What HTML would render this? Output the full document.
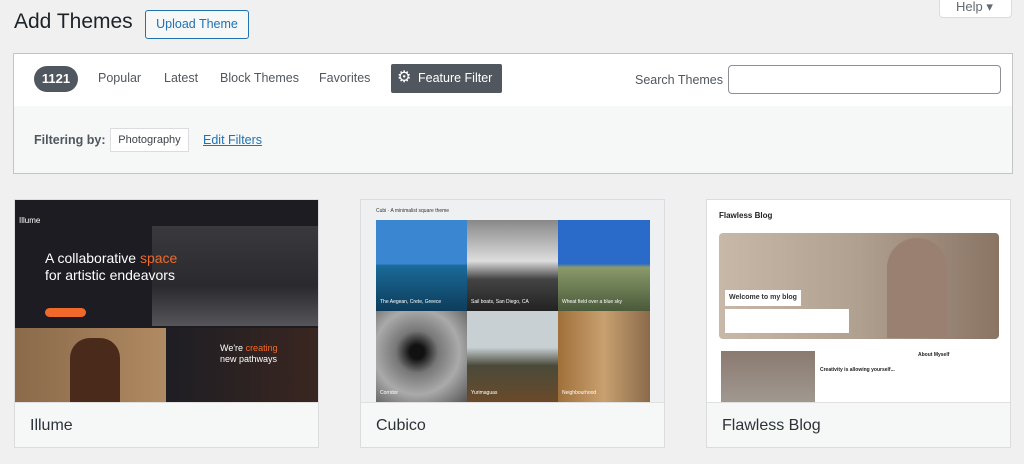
<!DOCTYPE html>
<html><head><style>
*{box-sizing:border-box;margin:0;padding:0}
body{width:1024px;height:464px;overflow:hidden;background:#f0f0f1;font-family:"Liberation Sans",sans-serif;color:#1d2327;position:relative}
.a{position:absolute}
.card{position:absolute;top:199px;width:305px;height:249px;border:1px solid #dcdcde;background:#fff;overflow:hidden}
.name{position:absolute;left:0;right:0;top:202px;height:47px;background:#f6f7f7;border-top:1px solid #e0e0e0;font-size:16px;font-weight:normal;padding:14px 0 0 15px;color:#2c3338}
.cell{position:absolute;width:91px;height:91px;color:#fff;font-size:5px}
.cell span{position:absolute;left:4px;bottom:6px}
.nav{position:absolute;top:17px;font-size:12.5px;color:#50575e}
</style></head><body>
<div class="a" style="left:14px;top:10px;font-size:21px;color:#1d2327">Add Themes</div>
<div class="a" style="left:145px;top:10px;width:104px;height:29px;border:1px solid #2271b1;border-radius:3px;background:#f6f7f7;color:#2271b1;font-size:12.5px;text-align:center;line-height:27px">Upload Theme</div>
<div class="a" style="left:939px;top:-10px;width:73px;height:28px;border:1px solid #dcdcde;border-radius:0 0 4px 4px;background:#fff;color:#646970;font-size:13px;padding:8px 0 0 16px">Help ▾</div>

<div class="a" style="left:13px;top:53px;width:1000px;height:121px;border:1px solid #c3c4c7;background:#f6f7f7">
 <div class="a" style="left:0;top:0;right:0;height:52px;background:#fff"></div>
 <div class="a" style="left:20px;top:12px;width:44px;height:26px;border-radius:13px;background:#50575e;color:#fff;font-size:13px;font-weight:bold;text-align:center;line-height:26px">1121</div>
 <div class="nav" style="left:84px">Popular</div>
 <div class="nav" style="left:150px">Latest</div>
 <div class="nav" style="left:206px">Block Themes</div>
 <div class="nav" style="left:305px">Favorites</div>
 <div class="a" style="left:377px;top:10px;width:111px;height:29px;background:#50575e;border-radius:2px;color:#fff;font-size:12.5px;line-height:29px;padding-left:27px">Feature Filter</div>
 <div class="a" style="left:383px;top:14px;color:#fff;font-size:16px;line-height:20px">⚙</div>
 <div class="nav" style="left:621px;top:19px">Search Themes</div>
 <div class="a" style="left:714px;top:11px;width:273px;height:29px;border:1px solid #8c8f94;border-radius:4px;background:#fff"></div>
 <div class="a" style="left:20px;top:79px;font-size:12.5px;font-weight:bold;color:#50575e">Filtering by:</div>
 <div class="a" style="left:96px;top:74px;width:79px;height:24px;border:1px solid #dcdcde;background:#fff;font-size:11px;color:#3c434a;text-align:center;line-height:22px">Photography</div>
 <div class="a" style="left:189px;top:79px;font-size:12.5px;color:#2271b1;text-decoration:underline">Edit Filters</div>
</div>

<div class="card" style="left:14px">
 <div class="a" style="left:0;top:0;width:305px;height:202px;background:#1c1c22"></div>
 <div class="a" style="left:137px;top:26px;width:168px;height:100px;background:linear-gradient(#3a3a3e,#2a2a2e 60%,#55555a)"></div>
 <div class="a" style="left:4px;top:16px;color:#fff;font-size:8px">Illume</div>
 <div class="a" style="left:30px;top:50px;color:#fff;font-size:14px;line-height:17px">A collaborative <span style="color:#f0692a">space</span><br>for artistic endeavors</div>
 <div class="a" style="left:30px;top:108px;width:41px;height:9px;border-radius:5px;background:#f0692a"></div>
 <div class="a" style="left:0;top:128px;width:151px;height:74px;background:linear-gradient(90deg,#8a6a4a,#b08a62)"></div>
 <div class="a" style="left:55px;top:138px;width:50px;height:64px;border-radius:20px 20px 0 0;background:#4a2a1a"></div>
 <div class="a" style="left:151px;top:128px;width:154px;height:74px;background:linear-gradient(90deg,#1e1e24,#3a2620)"></div>
 <div class="a" style="left:205px;top:143px;color:#fff;font-size:9px;line-height:11px">We're <span style="color:#f0692a">creating</span><br>new pathways</div>
 <div class="name">Illume</div>
</div>

<div class="card" style="left:360px">
 <div class="a" style="left:0;top:0;width:305px;height:202px;background:#eef0f2"></div>
 <div class="a" style="left:15px;top:8px;font-size:5px;color:#333">Cubi · A minimalist square theme</div>
 <div class="cell" style="left:15px;top:20px;background:linear-gradient(#3a86d0 48%,#1a6a9a 50%,#0d3d5a)"><span>The Aegean, Crete, Greece</span></div>
 <div class="cell" style="left:106px;top:20px;background:linear-gradient(#888,#ddd 45%,#444 65%,#222)"><span>Sail boats, San Diego, CA</span></div>
 <div class="cell" style="left:197px;top:20px;width:92px;background:linear-gradient(#2a6ac8 48%,#8a9a6a 52%,#4a5a3a)"><span>Wheat field over a blue sky</span></div>
 <div class="cell" style="left:15px;top:111px;background:radial-gradient(circle at 45% 45%,#111 10%,#777 30%,#aaa 60%,#555)"><span>Corridor</span></div>
 <div class="cell" style="left:106px;top:111px;background:linear-gradient(#c8d0d4 40%,#4a4a3a 60%,#6a4a2a)"><span>Yurimaguas</span></div>
 <div class="cell" style="left:197px;top:111px;width:92px;background:linear-gradient(90deg,#a0703a,#c8a070 50%,#8a6a4a)"><span>Neighbourhood</span></div>
 <div class="name">Cubico</div>
</div>

<div class="card" style="left:706px">
 <div class="a" style="left:0;top:0;width:305px;height:202px;background:#fff"></div>
 <div class="a" style="left:12px;top:11px;font-size:8px;font-weight:bold;color:#222">Flawless Blog</div>
 <div class="a" style="left:12px;top:33px;width:280px;height:106px;border-radius:4px;background:linear-gradient(90deg,#c8b8a8,#b0a090 50%,#8a7464)"></div>
 <div class="a" style="left:180px;top:38px;width:60px;height:100px;border-radius:30px 30px 0 0;background:#9a8070"></div>
 <div class="a" style="left:18px;top:90px;width:76px;height:16px;background:#fff;font-size:7px;font-weight:bold;color:#333;padding:4px 0 0 4px">Welcome to my blog</div>
 <div class="a" style="left:18px;top:109px;width:124px;height:24px;background:#fff"></div>
 <div class="a" style="left:14px;top:151px;width:94px;height:51px;background:linear-gradient(#8a7a70,#a09890)"></div>
 <div class="a" style="left:113px;top:167px;font-size:5px;font-weight:bold;color:#222">Creativity is allowing yourself...</div>
 <div class="a" style="left:211px;top:152px;font-size:5px;font-weight:bold;color:#222">About Myself</div>
 <div class="name">Flawless Blog</div>
</div>
</body></html>
